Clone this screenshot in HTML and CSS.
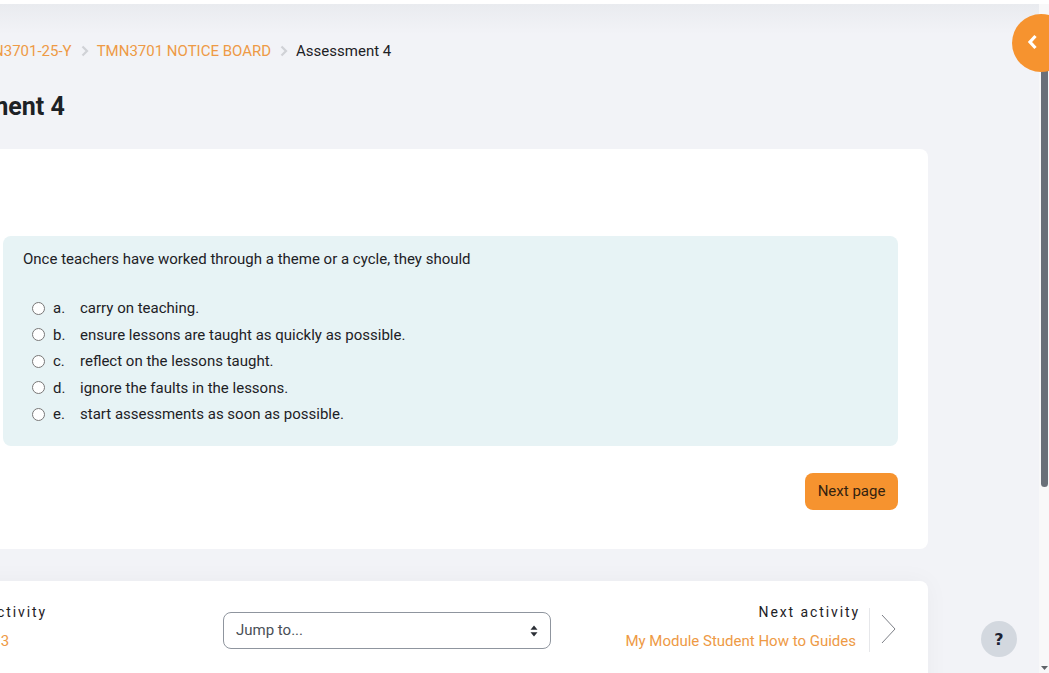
FILE: index.html
```html
<!DOCTYPE html>
<html lang="en">
<head>
<meta charset="utf-8">
<title>Assessment 4</title>
<link rel="stylesheet" href="styles.css">
</head>
<body>
<div class="page">
  <main class="main">
    <nav class="crumbs">
      <a class="crumb-link" href="#">TMN3701-25-Y</a>
      <svg class="crumb-sep" width="10" height="12" viewBox="0 0 10 12"><path d="M2.500 1.500 7 6 2.500 10.500" fill="none" stroke="#d0d2d6" stroke-width="2.200"/></svg>
      <a class="crumb-link" href="#">TMN3701 NOTICE BOARD</a>
      <svg class="crumb-sep" width="10" height="12" viewBox="0 0 10 12"><path d="M2.500 1.500 7 6 2.500 10.500" fill="none" stroke="#d0d2d6" stroke-width="2.200"/></svg>
      <span class="crumb-current">Assessment 4</span>
    </nav>
    <h1 class="title">Assessment 4</h1>
    <section class="card quiz">
      <div class="question">
        <p class="prompt">Once teachers have worked through a theme or a cycle, they should</p>
        <div class="options">
          <label class="option"><input type="radio" name="q" class="radio"><span class="letter">a.</span><span>carry on teaching.</span></label>
          <label class="option"><input type="radio" name="q" class="radio"><span class="letter">b.</span><span>ensure lessons are taught as quickly as possible.</span></label>
          <label class="option"><input type="radio" name="q" class="radio"><span class="letter">c.</span><span>reflect on the lessons taught.</span></label>
          <label class="option"><input type="radio" name="q" class="radio"><span class="letter">d.</span><span>ignore the faults in the lessons.</span></label>
          <label class="option"><input type="radio" name="q" class="radio"><span class="letter">e.</span><span>start assessments as soon as possible.</span></label>
        </div>
      </div>
      <div class="actions"><button class="next-btn" type="button">Next page</button></div>
    </section>
    <section class="card nav-card">
      <div class="prev">
        <div class="nav-label">Previous activity</div>
        <a class="nav-link prev-link" href="#">Assessment 3</a>
      </div>
      <div class="jump">
        <select class="jump-select"><option>Jump to...</option></select>
        <svg class="jump-arrows" width="8" height="12" viewBox="0 0 8 12"><path d="M4 0.500 7.500 4.800H0.500ZM4 11.500 0.500 7.200H7.500Z" fill="#2b2f36"/></svg>
      </div>
      <div class="next">
        <div class="next-text">
          <div class="nav-label">Next activity</div>
          <a class="nav-link" href="#">My Module Student How to Guides</a>
        </div>
        <svg class="next-chevron" width="15" height="30" viewBox="0 0 15 30"><path d="M1 1 14 15 1 29" fill="none" stroke="#7d8087" stroke-width="1"/></svg>
      </div>
    </section>
  </main>
  <div class="scrollbar">
    <div class="thumb"></div>
    <svg class="scroll-arrow" width="7" height="4" viewBox="0 0 7 4"><path d="M0 0H7L3.500 4Z" fill="#5f6368"/></svg>
  </div>
  <button class="drawer-toggle" type="button" aria-label="Open drawer">
    <svg width="12" height="16" viewBox="0 0 12 16"><path d="M9.500 2 4 8l5.500 6" fill="none" stroke="#fff" stroke-width="3.200"/></svg>
  </button>
  <button class="help" type="button">?</button>
</div>
</body>
</html>
```

FILE: styles.css
```css
* { box-sizing: border-box; }
html, body { margin: 0; height: 100%; overflow: hidden; }
body { font-family: Roboto, "Liberation Sans", sans-serif; font-size: 15px; color: #1d2125; background: #fff; }
.page { position: relative; display: flex; width: 1049px; height: 673px; overflow: hidden; padding-top: 4px; }
.main { flex: none; width: 1039px; height: 669px; overflow: hidden; background: linear-gradient(#e9ebef 0, #f2f3f7 30px); padding-top: 37px; }
.crumbs { display: flex; align-items: center; height: 20px; margin-left: -29px; color: #1d2125; font-size: 15px; }
.crumb-link { color: #ee9a45; text-decoration: none; }
.crumb-sep { margin: 0 7px 0 8px; }
.title { margin: 31px 0 0 -95px; font-size: 25px; line-height: 30px; font-weight: 700; color: #1d2125; white-space: nowrap; }
.card { background: #fff; border-radius: 8px; margin-left: -30px; width: 958px; }
.quiz { margin-top: 27px; height: 400px; padding: 87px 30px 0 33px; }
.question { height: 210px; background: #e7f3f5; border-radius: 8px; padding: 13px 20px; }
.prompt { margin: 0; line-height: 20px; }
.options { margin-top: 26px; display: flex; flex-direction: column; }
.option { display: flex; align-items: center; height: 26.500px; margin-left: 9px; }
.radio { width: 13px; height: 13px; margin: 0 8px 0 0; }
.letter { width: 27px; }
.actions { display: flex; justify-content: flex-end; margin-top: 27px; }
.next-btn { height: 37px; width: 93px; border: 0; border-radius: 8px; background: #f6932f; color: #33220f; font: inherit; padding: 0 0 2px; }
.nav-card { margin-top: 32px; height: 120px; display: flex; align-items: flex-start; position: relative; box-shadow: 0 0 24px rgba(30, 35, 60, 0.04); }
.prev { flex: none; width: 312px; margin-left: -57px; padding-top: 22px; margin-right: -2px; }
.nav-label { font-size: 14px; line-height: 18px; letter-spacing: 1.900px; white-space: nowrap; }
.nav-link { display: block; margin-top: 10px; color: #ee9a45; text-decoration: none; line-height: 20px; white-space: nowrap; }
.prev-link { margin-left: 1px; }
.jump { position: relative; flex: none; width: 328px; margin-top: 31px; }
.jump-select { display: block; width: 100%; height: 37px; border: 1px solid #8f959e; border-radius: 8px; background: #fff; color: #495057; font: inherit; padding: 0 12px 2px; appearance: none; }
.jump-arrows { position: absolute; right: 13px; top: 13px; }
.next { flex: none; width: 345px; display: flex; justify-content: flex-end; align-items: flex-start; padding-top: 22px; }
.next-text { text-align: right; padding-right: 13px; height: 44px; border-right: 1px solid #e6e7ea; margin-right: 11px; margin-top: 5px; }
.next-text .nav-label { margin-top: -5px; margin-right: -4px; }
.next-text .nav-link { margin-top: 10px; }
.next-chevron { margin-top: 11px; }
.scrollbar { position: relative; flex: none; width: 10px; height: 669px; background: #f8f8f9; }
.thumb { width: 7px; margin: 30px 0 0 2px; height: 453px; background: #6a7079; border-radius: 0 0 4px 4px; }
.scroll-arrow { position: absolute; left: 2px; bottom: 3px; }
.drawer-toggle { position: absolute; left: 1012px; top: 14px; width: 58px; height: 58px; border: 0; border-radius: 50%; background: #f6932f; padding: 0 0 3px 14px; text-align: left; display: flex; align-items: center; }
.help { position: absolute; left: 981px; top: 621px; width: 36px; height: 36px; border: 0; border-radius: 50%; background: #d3d8df; color: #1d2233; font: 700 16px "DejaVu Sans", sans-serif; padding: 0; }
```
